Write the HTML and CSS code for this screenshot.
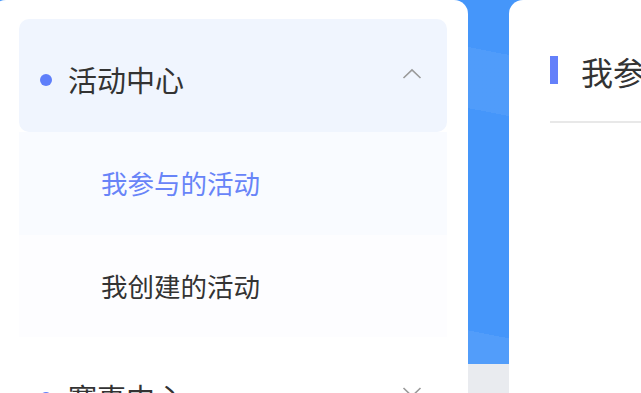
FILE: index.html
```html
<!DOCTYPE html>
<html lang="zh">
<head>
<meta charset="utf-8">
<link rel="stylesheet" href="styles.css">
</head>
<body>
<div class="page">
  <aside class="side">
    <div class="group">
      <div class="group-head active">
        <span class="dot"></span>
        <span class="group-title">活动中心</span>
        <svg class="chev" width="20" height="12" viewBox="0 0 20 12"><path d="M1.5 10 L10 1.8 L18.5 10" fill="none" stroke="#9a9a9a" stroke-width="1.6"/></svg>
      </div>
      <div class="sub sub-active">我参与的活动</div>
      <div class="sub sub-plain">我创建的活动</div>
    </div>
    <div class="group">
      <div class="group-head">
        <span class="dot"></span>
        <span class="group-title">赛事中心</span>
        <svg class="chev" width="20" height="12" viewBox="0 0 20 12"><path d="M1.5 2 L10 10.2 L18.5 2" fill="none" stroke="#9a9a9a" stroke-width="1.6"/></svg>
      </div>
    </div>
  </aside>
  <main class="content">
    <div class="title-row">
      <span class="bar"></span>
      <h1 class="title">我参与的活动</h1>
    </div>
    <div class="divider"></div>
  </main>
</div>
</body>
</html>
```
FILE: styles.css
```css
html, body {
  margin: 0;
  padding: 0;
  width: 641px;
  height: 393px;
  overflow: hidden;
}
body {
  font-family: "Noto Sans CJK SC", "Microsoft YaHei", sans-serif;
  color: #333;
  background-color: #e9ebef;
  background-image:
    linear-gradient(191deg, rgba(255,255,255,0) 16.5%, rgba(255,255,255,0.06) 16.5%, rgba(255,255,255,0.06) 29%, rgba(255,255,255,0) 29%, rgba(255,255,255,0) 74.5%, rgba(255,255,255,0.07) 74.5%),
    linear-gradient(#4596fa, #4596fa);
  background-size: 100% 364px, 100% 364px;
  background-repeat: no-repeat;
}
.page {
  display: flex;
  gap: 41px;
  height: 393px;
}
.side {
  flex: 0 0 auto;
  width: 476px;
  margin-left: -8px;
  background: #fff;
  border-radius: 14px 14px 0 0;
  padding: 19px 21px 0 27px;
  box-sizing: border-box;
}
.group-head {
  height: 113px;
  display: flex;
  align-items: center;
  border-radius: 10px;
  padding: 0 25px 0 21px;
  box-sizing: border-box;
}
.group-head.active {
  background: #f0f5fe;
}
.dot {
  width: 12px;
  height: 12px;
  border-radius: 50%;
  background: #5f7ffa;
  margin-top: 8px;
  flex: 0 0 auto;
}
.group-title {
  margin-left: 16px;
  font-size: 29px;
  line-height: 1;
  margin-top: 8px;
  flex: 1;
}
.chev {
  margin-top: -4px;
  flex: 0 0 auto;
}
.sub {
  display: flex;
  align-items: center;
  padding-left: 82px;
  font-size: 26.5px;
  line-height: 1;
}
.sub-active {
  height: 103px;
  background: #f9fbff;
  color: #6884f8;
}
.sub-plain {
  height: 102px;
  background: #fdfdff;
  color: #333;
}
.content {
  flex: 1;
  min-width: 0;
  background: #fff;
  border-radius: 14px 0 0 0;
  padding: 56px 0 0 41px;
  margin-right: -200px;
}
.title-row {
  display: flex;
  align-items: center;
  height: 28px;
}
.bar {
  width: 8px;
  height: 28px;
  background: #6480fa;
  flex: 0 0 auto;
}
.title {
  margin: 0 0 0 23px;
  font-size: 32px;
  font-weight: normal;
  line-height: 1;
  white-space: nowrap;
  color: #333;
  position: relative;
  top: 1px;
}
.divider {
  margin-top: 37px;
  height: 2px;
  background: #e8e8e8;
}
```
